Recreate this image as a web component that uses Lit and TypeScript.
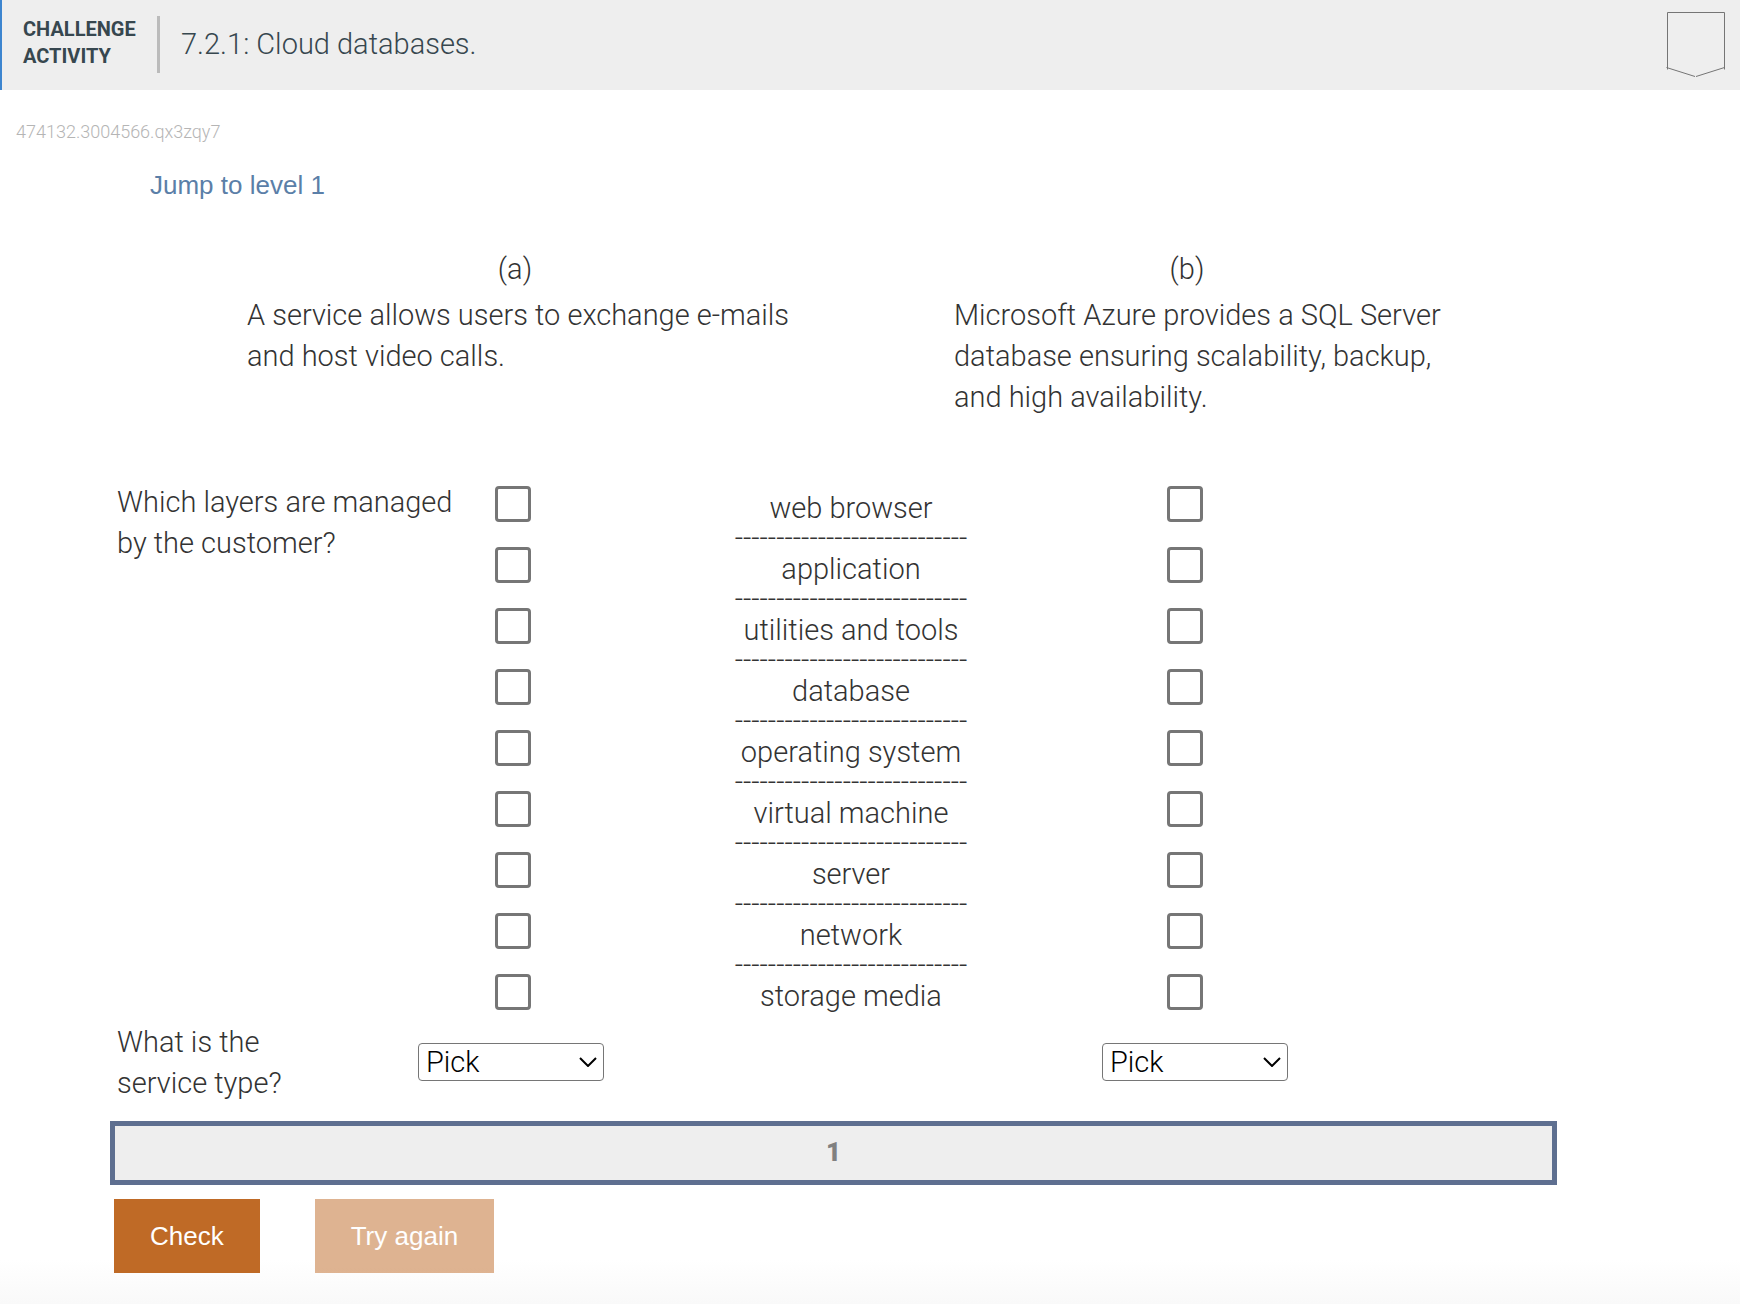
import { LitElement, html, css } from "lit";
import { customElement, property, state } from "lit/decorators.js";

const LAYERS = [
  "web browser",
  "application",
  "utilities and tools",
  "database",
  "operating system",
  "virtual machine",
  "server",
  "network",
  "storage media",
];

const SERVICE_TYPES = ["Pick", "IaaS", "PaaS", "SaaS"];
const DIVIDER = "-".repeat(28);

@customElement("activity-header")
export class ActivityHeader extends LitElement {
  @property() heading = "";

  static styles = css`
    :host {
      display: block;
    }
    .bar {
      display: flex;
      align-items: flex-start;
      box-sizing: border-box;
      height: 90px;
      padding: 12px 14px 0 21px;
      border-left: 2px solid #3d85cf;
      background: #eeeeee;
      color: #37474f;
    }
    .kind {
      width: 113px;
      margin-top: 4px;
      font-size: 20px;
      font-weight: 700;
      line-height: 27px;
    }
    .rule {
      width: 3px;
      height: 57px;
      margin: 4px 21px 0;
      background: #bbbbbb;
    }
    .title {
      flex: 1;
      margin: 12px 0 0;
      font-size: 29px;
      font-weight: 300;
      line-height: 41px;
    }
    .badge {
      display: block;
      width: 60px;
      height: 67px;
    }
  `;

  render() {
    return html`
      <header class="bar">
        <div class="kind">CHALLENGE ACTIVITY</div>
        <div class="rule"></div>
        <h1 class="title">${this.heading}</h1>
        <svg class="badge" viewBox="0 0 60 67" fill="none" stroke="#757575" aria-hidden="true">
          <path d="M1.5 57.5V0.5H58.5V57.5" />
          <path d="M0.5 55.5L29 64.5M30 64.5L58.5 55.5" />
        </svg>
      </header>
    `;
  }
}

@customElement("app-root")
export class AppRoot extends LitElement {
  @state() private checked = new Set<string>();

  static styles = css`
    :host {
      display: block;
      box-sizing: border-box;
      min-height: 100vh;
      background: linear-gradient(to top, #f9f9f9, #ffffff 44px);
      color: #333333;
      font-family: Roboto, "Liberation Sans", sans-serif;
      font-size: 29px;
      font-weight: 300;
      line-height: 41px;
    }
    .token {
      padding: 28px 16px 0;
      color: #b5b5b5;
      font-size: 18px;
      line-height: 27px;
    }
    .main {
      padding: 20px 183px 0 110px;
    }
    .jump {
      display: block;
      width: max-content;
      margin-left: 40px;
      color: #5b7fa8;
      font-family: "Liberation Sans", sans-serif;
      font-size: 26px;
      text-decoration: none;
    }
    .tags {
      display: grid;
      grid-template-columns: 387fr 36px 636fr 36px 352fr;
      margin-top: 43px;
    }
    .tag {
      justify-self: center;
      margin: 0;
      font-size: 29px;
      font-weight: 300;
    }
    .tag-a {
      grid-column: 2;
    }
    .tag-b {
      grid-column: 4;
    }
    .scenarios {
      display: grid;
      grid-template-columns: 137fr 562fr 145fr 491fr 112fr;
      margin-top: 5px;
    }
    .scenario {
      margin: 0;
    }
    .scenario-a {
      grid-column: 2;
    }
    .scenario-b {
      grid-column: 4;
    }
    .layers {
      display: grid;
      grid-template-columns: 385fr 36px 636fr 36px 354fr;
      margin-top: 68px;
    }
    .question {
      margin: 0;
      padding-left: 7px;
    }
    .question-layers {
      grid-column: 1;
      grid-row: 1 / span 9;
      margin: -4px 32px 0 0;
    }
    .box-a {
      grid-column: 2;
    }
    .layer {
      grid-column: 3;
      padding-left: 4px;
      line-height: 44px;
      text-align: center;
    }
    .box-b {
      grid-column: 4;
    }
    .divider {
      line-height: 17px;
    }
    .box {
      appearance: none;
      box-sizing: border-box;
      width: 36px;
      height: 36px;
      margin: 0;
      border: 3px solid #767676;
      border-radius: 4px;
      background: #ffffff;
    }
    .box:checked {
      background: #1a73e8;
      border-color: #1a73e8;
    }
    .types {
      display: grid;
      grid-template-columns: 308fr 186px 498fr 186px 269fr;
      margin-top: 4px;
    }
    .question-type {
      max-width: 200px;
    }
    .picker {
      display: grid;
      align-self: start;
      align-items: center;
      margin-top: 21px;
    }
    .picker-a {
      grid-column: 2;
    }
    .picker-b {
      grid-column: 4;
    }
    .select {
      appearance: none;
      grid-area: 1 / 1;
      box-sizing: border-box;
      width: 100%;
      height: 38px;
      padding: 0 32px 0 7px;
      border: 1px solid #767676;
      border-radius: 4px;
      background: #ffffff;
      color: #000000;
      font: inherit;
      line-height: 36px;
    }
    .chevron {
      grid-area: 1 / 1;
      justify-self: end;
      width: 18px;
      height: 10px;
      margin-right: 7px;
      pointer-events: none;
    }
    .progress {
      box-sizing: border-box;
      margin-top: 17px;
      padding-bottom: 2px;
      border: 5px solid #5e6f90;
      background: #eeeeee;
      color: #808080;
      font-size: 26px;
      font-weight: 900;
      line-height: 52px;
      text-align: center;
    }
    .actions {
      display: flex;
      gap: 55px;
      padding: 14px 4px 30px;
    }
    .button {
      height: 74px;
      padding: 0 36px;
      border: 0;
      background: #bf6a26;
      color: #ffffff;
      font-family: "Liberation Sans", sans-serif;
      font-size: 26px;
      font-weight: 300;
    }
    .button:disabled {
      opacity: 0.5;
    }
  `;

  private toggle(key: string, event: Event) {
    const next = new Set(this.checked);
    if ((event.target as HTMLInputElement).checked) next.add(key);
    else next.delete(key);
    this.checked = next;
  }

  private renderBox(column: "a" | "b", layer: string) {
    const key = `${column}-${layer}`;
    return html`<input
      class="box box-${column}"
      type="checkbox"
      aria-label="(${column}) ${layer}"
      .checked=${this.checked.has(key)}
      @change=${(event: Event) => this.toggle(key, event)}
    />`;
  }

  private renderPicker(column: "a" | "b") {
    return html`
      <div class="picker picker-${column}">
        <select class="select" aria-label="Service type (${column})">
          ${SERVICE_TYPES.map((type) => html`<option>${type}</option>`)}
        </select>
        <svg class="chevron" viewBox="0 0 18 10" fill="none" stroke="#000000" stroke-width="2" aria-hidden="true">
          <path d="M1 1L9 9L17 1" />
        </svg>
      </div>
    `;
  }

  render() {
    return html`
      <activity-header heading="7.2.1: Cloud databases."></activity-header>
      <div class="token">474132.3004566.qx3zqy7</div>
      <main class="main">
        <a class="jump" href="#level-1">Jump to level 1</a>

        <div class="tags">
          <h2 class="tag tag-a">(a)</h2>
          <h2 class="tag tag-b">(b)</h2>
        </div>
        <div class="scenarios">
          <p class="scenario scenario-a">A service allows users to exchange e-mails and host video calls.</p>
          <p class="scenario scenario-b">
            Microsoft Azure provides a SQL Server database ensuring scalability, backup, and high availability.
          </p>
        </div>

        <div class="layers">
          <p class="question question-layers">Which layers are managed by the customer?</p>
          ${LAYERS.map(
            (layer, index) => html`
              ${this.renderBox("a", layer)}
              <div class="layer">
                <div>${layer}</div>
                ${index < LAYERS.length - 1
                  ? html`<div class="divider" aria-hidden="true">${DIVIDER}</div>`
                  : ""}
              </div>
              ${this.renderBox("b", layer)}
            `,
          )}
        </div>

        <div class="types">
          <p class="question question-type">What is the service type?</p>
          ${this.renderPicker("a")} ${this.renderPicker("b")}
        </div>

        <div class="progress">1</div>
        <div class="actions">
          <button class="button" type="button">Check</button>
          <button class="button" type="button" disabled>Try again</button>
        </div>
      </main>
    `;
  }
}
